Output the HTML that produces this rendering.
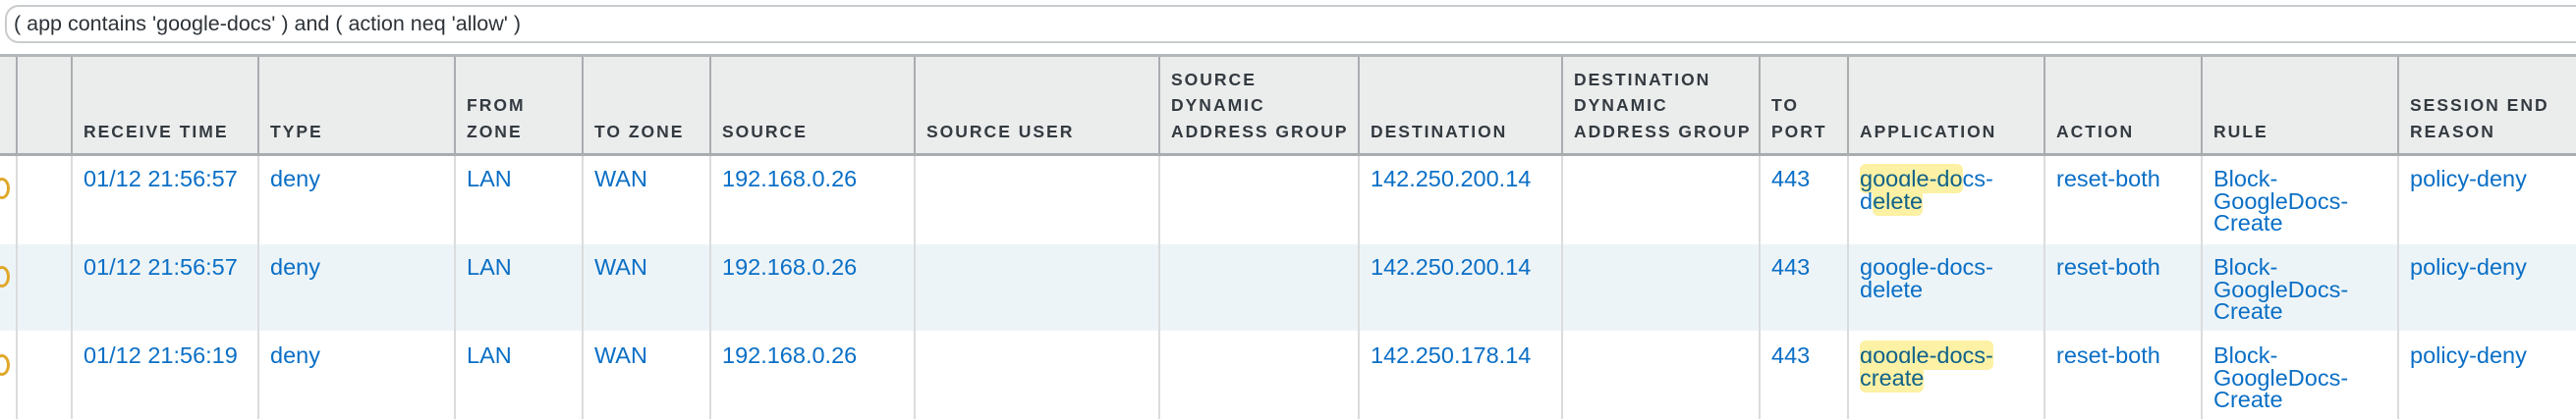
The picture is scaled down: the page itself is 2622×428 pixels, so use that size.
<!DOCTYPE html>
<html><head><meta charset="utf-8">
<style>
html,body{margin:0;padding:0;background:#fff;width:2622px;height:428px;overflow:hidden;font-family:"Liberation Sans",sans-serif;}
.search{position:absolute;left:5px;top:5px;width:2640px;height:35px;border:2px solid #c9ccce;border-radius:14px;}
.search span{position:absolute;left:7px;top:5px;font-size:21.5px;color:#2d3338;white-space:nowrap;}
table{position:absolute;left:0;top:55px;border-collapse:collapse;table-layout:fixed;width:2622px;}
th{background:#ebecec;border-top:3px solid #b3b7ba;border-bottom:3px solid #a9adb0;border-left:2px solid #a9adb0;height:89px;padding:0 6px 9px 11px;vertical-align:bottom;text-align:left;font-size:17.5px;font-weight:bold;letter-spacing:2px;line-height:26.5px;color:#333a40;}
th:first-child{border-left:none}
td{border-left:2px solid #dadcdd;height:76px;vertical-align:top;padding:12px 6px 0 11px;font-size:23.5px;line-height:22.5px;color:#0a6fc6;}
td:first-child{border-left:none;padding:0;position:relative}
tr.alt td{background:#edf4f7}
tbody tr{border-top:2px solid #fff}
.hl{background:#fcf1a4;color:#10628a;border-radius:6px;padding:2px 0}
.ic{position:absolute;left:-6px;top:22px;width:10px;height:16px;border:3px solid #e0a828;border-radius:50%;}
</style></head><body>
<div class="search"><span>( app contains 'google-docs' ) and ( action neq 'allow' )</span></div>
<table>
<colgroup><col style="width:17px"><col style="width:56px"><col style="width:190px"><col style="width:200px"><col style="width:130px"><col style="width:130px"><col style="width:208px"><col style="width:249px"><col style="width:203px"><col style="width:207px"><col style="width:201px"><col style="width:90px"><col style="width:200px"><col style="width:160px"><col style="width:200px"><col style="width:181px"></colgroup>
<thead><tr><th></th><th></th><th>RECEIVE TIME</th><th>TYPE</th><th>FROM ZONE</th><th>TO ZONE</th><th>SOURCE</th><th>SOURCE USER</th><th>SOURCE DYNAMIC ADDRESS GROUP</th><th>DESTINATION</th><th>DESTINATION DYNAMIC ADDRESS GROUP</th><th>TO PORT</th><th>APPLICATION</th><th>ACTION</th><th>RULE</th><th>SESSION END REASON</th></tr></thead>
<tbody>
<tr><td><div class="ic"></div></td><td></td><td>01/12 21:56:57</td><td>deny</td><td>LAN</td><td>WAN</td><td>192.168.0.26</td><td></td><td></td><td>142.250.200.14</td><td></td><td>443</td><td><span class="hl">google-do</span>cs-<br>d<span class="hl">elete</span></td><td>reset-both</td><td>Block-<br>GoogleDocs-<br>Create</td><td>policy-deny</td></tr>
<tr class="alt"><td><div class="ic"></div></td><td></td><td>01/12 21:56:57</td><td>deny</td><td>LAN</td><td>WAN</td><td>192.168.0.26</td><td></td><td></td><td>142.250.200.14</td><td></td><td>443</td><td>google-docs-<br>delete</td><td>reset-both</td><td>Block-<br>GoogleDocs-<br>Create</td><td>policy-deny</td></tr>
<tr><td><div class="ic"></div></td><td></td><td>01/12 21:56:19</td><td>deny</td><td>LAN</td><td>WAN</td><td>192.168.0.26</td><td></td><td></td><td>142.250.178.14</td><td></td><td>443</td><td><span class="hl">google-docs-</span><br><span class="hl">create</span></td><td>reset-both</td><td>Block-<br>GoogleDocs-<br>Create</td><td>policy-deny</td></tr>
</tbody></table>
</body></html>
